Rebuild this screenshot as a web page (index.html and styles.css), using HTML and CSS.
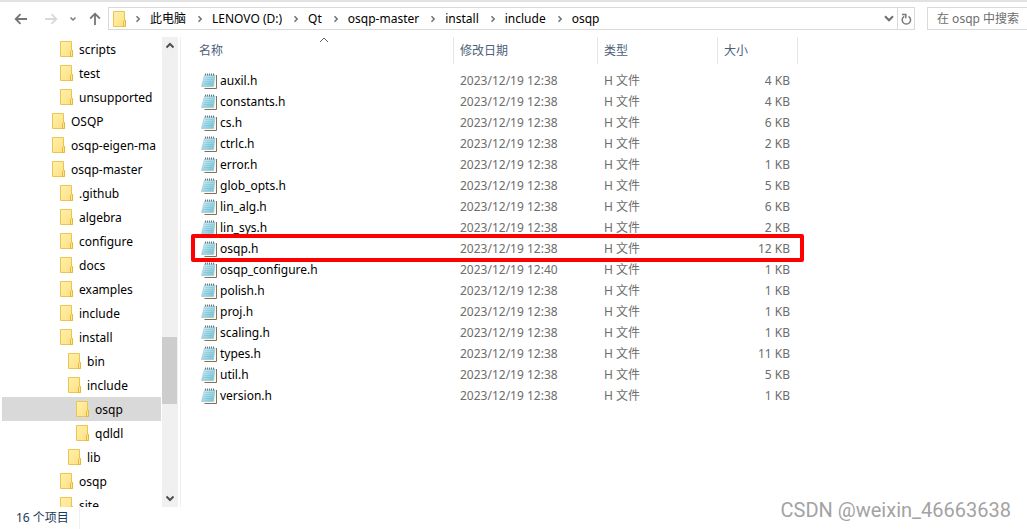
FILE: index.html
```
<!DOCTYPE html>
<html lang="zh-CN">
<head>
    <meta charset="UTF-8">
    <title>osqp</title>
    <link rel="stylesheet" href="styles.css">
</head>
<body>
    <!-- shared icons -->
    <svg class="sprite" aria-hidden="true">
        <defs>
            <linearGradient id="folderFill" x1="0" y1="0" x2="1" y2="1">
                <stop offset="0" stop-color="#fff0ae"/>
                <stop offset="1" stop-color="#ffdf80"/>
            </linearGradient>
            <linearGradient id="noteFill" x1="0" y1="0" x2="1" y2="1">
                <stop offset="0" stop-color="#d8f1f7"/>
                <stop offset="1" stop-color="#6fbfd4"/>
            </linearGradient>
        </defs>
        <symbol id="folder" viewBox="0 0 13 16">
            <path d="M.5.5h11v9h1v6H.5z" fill="url(#folderFill)" stroke="#ecc64c"/>
            <path d="M10.5 15.500v-5l1-1h1v6z" fill="#ffe694" stroke="#e3b93a"/>
        </symbol>
        <symbol id="note" viewBox="0 0 16 16">
            <path d="M5 2h10.500v13.500H3.500V14z" fill="#fbf9f5"/>
            <path d="M15.500 2v13.500H3.500" fill="none" stroke="#84704f"/>
            <path d="M3.500 2h10.500L12.500 13.500H.5z" fill="url(#noteFill)" stroke="#8fc3d1" stroke-width=".6"/>
            <path d="M4 4.500h8.500M3.700 6.500h8.500M3.400 8.500h8.500M3 10.500h8.500" stroke="#5aa9c0" stroke-width=".5" opacity=".5"/>
            <path d="M4.500.5v2M6.500.5v2M8.500.5v2M10.500.5v2M12.500.5v2" stroke="#4e5960" stroke-width=".8"/>
        </symbol>
        <symbol id="chevron" viewBox="0 0 6 8">
            <path d="M1.500 1.300L4.200 4 1.500 6.700" fill="none" stroke="#707070" stroke-width="1.500"/>
        </symbol>
    </svg>

    <div class="explorer">
        <header class="toolbar">
            <nav class="history">
                <button class="nav-btn" aria-label="后退"><svg width="14" height="12" viewBox="0 0 14 12"><path d="M13 6H2M6.500 1.200L1.700 6l4.800 4.800" fill="none" stroke="#757575" stroke-width="1.800"/></svg></button>
                <button class="nav-btn forward" aria-label="前进" disabled><svg width="14" height="12" viewBox="0 0 14 12"><path d="M1 6h11M7.500 1.200L12.300 6l-4.800 4.800" fill="none" stroke="#d9d9d9" stroke-width="1.800"/></svg></button>
                <button class="nav-btn recent" aria-label="最近浏览的位置"><svg width="8" height="6" viewBox="0 0 8 6"><path d="M1.500 1.500L4 4l2.500-2.500" fill="none" stroke="#777" stroke-width="1.400"/></svg></button>
                <button class="nav-btn" aria-label="上移"><svg width="12" height="14" viewBox="0 0 12 14"><path d="M6 13V2M1.200 6.500L6 1.700l4.800 4.800" fill="none" stroke="#757575" stroke-width="1.800"/></svg></button>
            </nav>
            <div class="address">
                <svg class="folder"><use href="#folder"/></svg>
                <ol class="crumbs">
                    <li><svg class="chevron"><use href="#chevron"/></svg><a href="#">此电脑</a></li>
                    <li><svg class="chevron"><use href="#chevron"/></svg><a href="#">LENOVO (D:)</a></li>
                    <li><svg class="chevron"><use href="#chevron"/></svg><a href="#">Qt</a></li>
                    <li><svg class="chevron"><use href="#chevron"/></svg><a href="#">osqp-master</a></li>
                    <li><svg class="chevron"><use href="#chevron"/></svg><a href="#">install</a></li>
                    <li><svg class="chevron"><use href="#chevron"/></svg><a href="#">include</a></li>
                    <li><svg class="chevron"><use href="#chevron"/></svg><a href="#">osqp</a></li>
                </ol>
                <button class="address-btn" aria-label="以前的位置"><svg width="10" height="7" viewBox="0 0 10 7"><path d="M1 1.300l4 4 4-4" fill="none" stroke="#6e6e6e" stroke-width="2"/></svg></button>
                <button class="address-btn refresh" aria-label="刷新"><svg width="12" height="12" viewBox="0 0 12 12"><path d="M4.200 3.300A4.200 4.200 0 1 0 8.500 3.300M2 1.500h3.800v3.800" fill="none" stroke="#777" stroke-width="1.500"/></svg></button>
            </div>
            <input class="search" type="search" placeholder="在 osqp 中搜索" aria-label="搜索">
        </header>

        <main class="content">
            <aside class="sidebar">
                <ul class="tree">
                    <li class="level-2"><svg class="folder"><use href="#folder"/></svg>scripts</li>
                    <li class="level-2"><svg class="folder"><use href="#folder"/></svg>test</li>
                    <li class="level-2"><svg class="folder"><use href="#folder"/></svg>unsupported</li>
                    <li class="level-1"><svg class="folder"><use href="#folder"/></svg>OSQP</li>
                    <li class="level-1"><svg class="folder"><use href="#folder"/></svg>osqp-eigen-ma</li>
                    <li class="level-1"><svg class="folder"><use href="#folder"/></svg>osqp-master</li>
                    <li class="level-2"><svg class="folder"><use href="#folder"/></svg>.github</li>
                    <li class="level-2"><svg class="folder"><use href="#folder"/></svg>algebra</li>
                    <li class="level-2"><svg class="folder"><use href="#folder"/></svg>configure</li>
                    <li class="level-2"><svg class="folder"><use href="#folder"/></svg>docs</li>
                    <li class="level-2"><svg class="folder"><use href="#folder"/></svg>examples</li>
                    <li class="level-2"><svg class="folder"><use href="#folder"/></svg>include</li>
                    <li class="level-2"><svg class="folder"><use href="#folder"/></svg>install</li>
                    <li class="level-3"><svg class="folder"><use href="#folder"/></svg>bin</li>
                    <li class="level-3"><svg class="folder"><use href="#folder"/></svg>include</li>
                    <li class="level-4 selected"><svg class="folder"><use href="#folder"/></svg>osqp</li>
                    <li class="level-4"><svg class="folder"><use href="#folder"/></svg>qdldl</li>
                    <li class="level-3"><svg class="folder"><use href="#folder"/></svg>lib</li>
                    <li class="level-2"><svg class="folder"><use href="#folder"/></svg>osqp</li>
                    <li class="level-2"><svg class="folder"><use href="#folder"/></svg>site</li>
                </ul>
                <div class="scrollbar">
                    <button class="scroll-btn" aria-label="向上滚动"><svg width="10" height="7" viewBox="0 0 10 7"><path d="M1.500 5.500L5 2l3.500 3.500" fill="none" stroke="#505050" stroke-width="2"/></svg></button>
                    <div class="track"><div class="before"></div><div class="thumb"></div><div class="after"></div></div>
                    <button class="scroll-btn" aria-label="向下滚动"><svg width="10" height="7" viewBox="0 0 10 7"><path d="M1.500 1.500L5 5l3.500-3.500" fill="none" stroke="#505050" stroke-width="2"/></svg></button>
                </div>
            </aside>

            <section class="files">
                <table>
                    <thead>
                        <tr>
                            <th class="name sorted"><span>名称</span><svg class="sort" width="10" height="6" viewBox="0 0 10 6"><path d="M1 5l4-4 4 4" fill="none" stroke="#666"/></svg></th>
                            <th class="date"><span>修改日期</span></th>
                            <th class="type"><span>类型</span></th>
                            <th class="size"><span>大小</span></th>
                        </tr>
                    </thead>
                    <tbody>
                        <tr><td><svg class="note"><use href="#note"/></svg>auxil.h</td><td>2023/12/19 12:38</td><td>H 文件</td><td>4 KB</td></tr>
                        <tr><td><svg class="note"><use href="#note"/></svg>constants.h</td><td>2023/12/19 12:38</td><td>H 文件</td><td>4 KB</td></tr>
                        <tr><td><svg class="note"><use href="#note"/></svg>cs.h</td><td>2023/12/19 12:38</td><td>H 文件</td><td>6 KB</td></tr>
                        <tr><td><svg class="note"><use href="#note"/></svg>ctrlc.h</td><td>2023/12/19 12:38</td><td>H 文件</td><td>2 KB</td></tr>
                        <tr><td><svg class="note"><use href="#note"/></svg>error.h</td><td>2023/12/19 12:38</td><td>H 文件</td><td>1 KB</td></tr>
                        <tr><td><svg class="note"><use href="#note"/></svg>glob_opts.h</td><td>2023/12/19 12:38</td><td>H 文件</td><td>5 KB</td></tr>
                        <tr><td><svg class="note"><use href="#note"/></svg>lin_alg.h</td><td>2023/12/19 12:38</td><td>H 文件</td><td>6 KB</td></tr>
                        <tr><td><svg class="note"><use href="#note"/></svg>lin_sys.h</td><td>2023/12/19 12:38</td><td>H 文件</td><td>2 KB</td></tr>
                        <tr class="marked"><td><svg class="note"><use href="#note"/></svg>osqp.h</td><td>2023/12/19 12:38</td><td>H 文件</td><td>12 KB</td></tr>
                        <tr><td><svg class="note"><use href="#note"/></svg>osqp_configure.h</td><td>2023/12/19 12:40</td><td>H 文件</td><td>1 KB</td></tr>
                        <tr><td><svg class="note"><use href="#note"/></svg>polish.h</td><td>2023/12/19 12:38</td><td>H 文件</td><td>1 KB</td></tr>
                        <tr><td><svg class="note"><use href="#note"/></svg>proj.h</td><td>2023/12/19 12:38</td><td>H 文件</td><td>1 KB</td></tr>
                        <tr><td><svg class="note"><use href="#note"/></svg>scaling.h</td><td>2023/12/19 12:38</td><td>H 文件</td><td>1 KB</td></tr>
                        <tr><td><svg class="note"><use href="#note"/></svg>types.h</td><td>2023/12/19 12:38</td><td>H 文件</td><td>11 KB</td></tr>
                        <tr><td><svg class="note"><use href="#note"/></svg>util.h</td><td>2023/12/19 12:38</td><td>H 文件</td><td>5 KB</td></tr>
                        <tr><td><svg class="note"><use href="#note"/></svg>version.h</td><td>2023/12/19 12:38</td><td>H 文件</td><td>1 KB</td></tr>
                    </tbody>
                </table>
            </section>
        </main>

        <footer class="status"><span>16 个项目</span></footer>
        <div class="watermark">CSDN @weixin_46663638</div>
    </div>
</body>
</html>
```

FILE: styles.css
```
* {
    box-sizing: border-box;
}
body {
    margin: 0;
    background: #fff;
    color: #000;
    font-family: "Noto Sans", "Noto Sans CJK SC", sans-serif;
    font-size: 12px;
}
button {
    display: flex;
    align-items: center;
    justify-content: center;
    padding: 0;
    border: none;
    background: none;
}
svg {
    display: block;
    flex: none;
}
.sprite {
    position: absolute;
    width: 0;
    height: 0;
}
.explorer {
    position: relative;
    display: flex;
    flex-direction: column;
    height: 100vh;
    overflow: hidden;
}

/* toolbar */
.toolbar {
    display: flex;
    flex: none;
    height: 37px;
    padding: 5px 0 7px 9px;
    border-top: 2px solid #e2e2e2;
}
.history {
    display: flex;
    width: 99px;
}
.nav-btn {
    width: 24px;
    height: 24px;
}
.forward {
    margin-left: 6px;
}
.recent {
    width: 20px;
}
.address {
    display: flex;
    flex: 1;
    align-items: center;
    min-width: 0;
    height: 23px;
    padding-left: 4px;
    border: 1px solid #d9d9d9;
}
.folder {
    width: 13px;
    height: 16px;
}
.crumbs {
    display: flex;
    flex: 1;
    margin: 0;
    padding: 0;
    list-style: none;
}
.crumbs li {
    display: flex;
    align-items: center;
    white-space: nowrap;
}
.crumbs a {
    padding-right: 2px;
    color: #000;
    line-height: 20px;
    text-decoration: none;
}
.chevron {
    width: 6px;
    height: 8px;
    margin: 0 9px;
}
.address-btn {
    width: 17px;
    height: 21px;
}
.refresh {
    border-left: 1px solid #d9d9d9;
}
.search {
    width: 108px;
    height: 23px;
    margin: 0 -8px 0 12px;
    padding: 0 0 0 9px;
    border: 1px solid #d9d9d9;
    font: inherit;
}
.search::placeholder {
    color: #6d6d6d;
    opacity: 1;
}

/* folder tree */
.content {
    display: flex;
    flex: 1;
    min-height: 0;
}
.sidebar {
    display: flex;
    flex: none;
    width: 181px;
    padding-right: 2px;
    border-right: 1px solid #f0f0f0;
}
.tree {
    flex: 1;
    min-width: 0;
    margin: 0;
    padding: 0 1px 0 2px;
    overflow: hidden;
    list-style: none;
}
.tree li {
    display: flex;
    align-items: center;
    gap: 6px;
    height: 24px;
    overflow: hidden;
    white-space: nowrap;
}
.tree .level-1 {
    padding-left: 50px;
}
.tree .level-2 {
    padding-left: 58px;
}
.tree .level-3 {
    padding-left: 66px;
}
.tree .level-4 {
    padding-left: 74px;
}
.tree .selected {
    background: #d9d9d9;
}
.scrollbar {
    display: flex;
    flex: none;
    flex-direction: column;
    width: 16px;
    background: #f0f0f0;
}
.scroll-btn {
    width: 15px;
    height: 17px;
}
.track {
    display: flex;
    flex: 1;
    flex-direction: column;
}
.before {
    flex: 283;
}
.thumb {
    flex: 67;
    width: 15px;
    background: #cdcdcd;
}
.after {
    flex: 86;
}

/* file list */
.files {
    flex: 1;
    min-width: 0;
    padding-left: 12px;
}
table {
    width: 605px;
    border-collapse: collapse;
    table-layout: fixed;
}
th {
    position: relative;
    height: 33px;
    padding: 0;
    color: #4c607a;
    font-weight: normal;
    text-align: left;
    vertical-align: top;
}
th span {
    display: block;
    height: 27px;
    padding-left: 6px;
    border-right: 1px solid #e5e5e5;
    line-height: 27px;
}
.name {
    width: 261px;
}
.date {
    width: 144px;
}
.type {
    width: 120px;
}
.size {
    width: 80px;
}
.sort {
    position: absolute;
    top: 0;
    left: calc(50% - 5px);
}
tbody tr {
    position: relative;
}
td {
    height: 21px;
    padding: 0 0 0 6px;
    color: #6d6d6d;
    line-height: 21px;
    white-space: nowrap;
}
td:first-child {
    display: flex;
    align-items: center;
    gap: 3px;
    padding-left: 8px;
    color: #000;
}
td:last-child {
    padding-right: 8px;
    text-align: right;
}
.note {
    width: 16px;
    height: 16px;
}
.marked td:first-child::after {
    content: "";
    position: absolute;
    inset: -4px -6px -3px -2px;
    border: 4px solid #fe0000;
    border-radius: 2px;
}

/* status bar */
.status {
    flex: none;
    height: 22px;
    padding-left: 16px;
    color: #1e395b;
    line-height: 22px;
}
.status span {
    display: inline-block;
    padding-right: 10px;
    border-right: 1px solid #f0f0f0;
}
.watermark {
    position: absolute;
    right: 16px;
    bottom: 7px;
    color: #a3a3a3;
    font-family: Roboto, sans-serif;
    font-size: 20px;
    line-height: 24px;
}
```
